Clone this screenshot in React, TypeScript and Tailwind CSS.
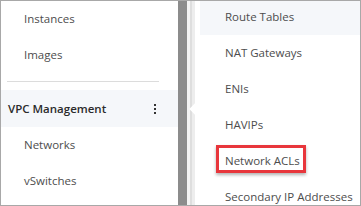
const LEFT = ["Instances", "Images"];
const SUB = ["Networks", "vSwitches"];
const RIGHT = ["Route Tables", "NAT Gateways", "ENIs", "HAVIPs", "Network ACLs", "Secondary IP Addresses"];

function Kebab() {
  return (
    <div className="flex flex-col gap-[2px]">
      <span className="block h-[2px] w-[2px] bg-[#333]" />
      <span className="block h-[2px] w-[2px] bg-[#333]" />
      <span className="block h-[2px] w-[2px] bg-[#333]" />
    </div>
  );
}

export default function App() {
  return (
    <div
      className="flex h-[206px] w-[361px] overflow-hidden border border-[#a8a8a8] bg-white text-[11.5px] text-[#4d4d4d]"
      style={{ fontFamily: '"Open Sans", "Segoe UI", sans-serif' }}
    >
      {/* left nav */}
      <div className="flex w-[177px] shrink-0 flex-col">
        {LEFT.map((t) => (
          <div key={t} className="flex h-[36px] shrink-0 items-center pl-[23px]">
            {t}
          </div>
        ))}
        <div className="mx-[6px] my-[8px] h-px w-[152px] shrink-0 bg-[#dcdcdc]" />
        <div className="flex h-[37px] shrink-0 items-center justify-between bg-[#f5f7fa] pl-[7px] pr-[22px] font-semibold text-[#2b2b2b]">
          <span>VPC Management</span>
          <Kebab />
        </div>
        {SUB.map((t) => (
          <div key={t} className="flex h-[36px] shrink-0 items-center pl-[23px]">
            {t}
          </div>
        ))}
      </div>

      {/* splitter */}
      <div className="w-[9px] shrink-0 bg-[#8c8c8c]" />
      <div className="w-[3px] shrink-0 bg-[#f3f3f3]" />
      <div className="w-[2px] shrink-0 bg-[#dedede]" />
      <div className="w-[3px] shrink-0 bg-[#ededed]" />

      {/* right sub nav */}
      <div className="relative flex flex-1 flex-col pl-[5px]">
        <div className="absolute left-[-4px] top-[104px] h-[8px] w-[8px] rotate-45 bg-white" />
        <div className="-mt-[2px] flex flex-col">
          {RIGHT.map((t, i) => (
            <div
              key={t}
              className={`relative flex h-[36px] shrink-0 items-center pl-[25px] ${i === 0 ? "bg-[#f5f7fa]" : ""}`}
            >
              {t}
              {t === "Network ACLs" && (
                <div className="absolute left-[16px] top-[2px] h-[28px] w-[90px] border-[3px] border-[#e8363c] shadow-[0_2px_3px_rgba(0,0,0,0.3)]" />
              )}
            </div>
          ))}
        </div>
      </div>
    </div>
  );
}
